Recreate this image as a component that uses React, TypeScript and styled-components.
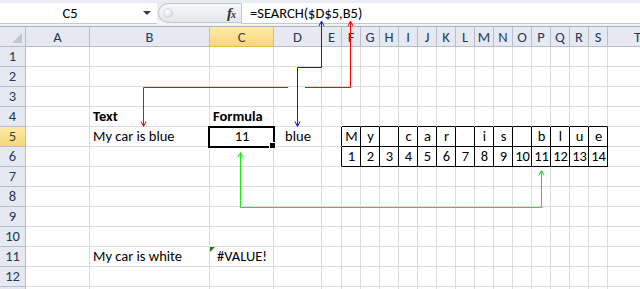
import React from "react";
import styled, { createGlobalStyle, css } from "styled-components";

const GRID = "#dadcdd";
const HEAD_LINE = "#b7bec9";
const FONT = "'Carlito', 'Lato', 'Liberation Sans', sans-serif";

const GlobalStyle = createGlobalStyle`
  html, body {
    margin: 0;
    padding: 0;
    background: #ffffff;
    overflow: hidden;
  }
`;

const Window = styled.div`
  position: relative;
  width: 640px;
  height: 289px;
  overflow: hidden;
  font-family: ${FONT};
  color: #000;
`;

const FormulaBar = styled.div`
  display: flex;
  height: 27px;
  box-sizing: border-box;
  padding-top: 3px;
  background: linear-gradient(#e9ecf1, #e9ecf1 20px, #f4f5f7 21px);
  border-bottom: 1px solid #a9b1bc;
`;

const NameBox = styled.div`
  display: flex;
  align-items: center;
  width: 157px;
  height: 20px;
  background: #fff;
  border-bottom: 1px solid #c3c9d1;
  font-size: 14.5px;
`;

const NameText = styled.div`
  width: 140px;
  text-align: center;
`;

const DropArrow = styled.div`
  margin-left: 3px;
  width: 0;
  height: 0;
  border-left: 4px solid transparent;
  border-right: 4px solid transparent;
  border-top: 4px solid #3a3a3a;
`;

const Splitter = styled.div`
  position: relative;
  display: flex;
  align-items: center;
  justify-content: flex-end;
  margin-left: 1px;
  width: 83px;
  height: 20px;
  box-sizing: border-box;
  border: 1px solid #c2c8d0;
  border-right: none;
  border-radius: 10px 0 0 10px;
  background: linear-gradient(#f7f8fa, #e3e7ec);
  padding-right: 6px;
`;

const Knob = styled.div`
  position: absolute;
  left: 4px;
  top: 4px;
  width: 10px;
  height: 10px;
  border-radius: 50%;
  background: radial-gradient(circle at 40% 35%, #ffffff, #cfd4da);
  border: 1px solid #d5dae0;
  box-sizing: border-box;
`;

const Fx = styled.span`
  font-family: 'Liberation Serif', serif;
  font-style: italic;
  font-weight: bold;
  font-size: 15px;
  color: #333;
  letter-spacing: -1px;
  sub {
    font-size: 10px;
    vertical-align: baseline;
  }
`;

const FormulaInput = styled.div`
  flex: 1;
  display: flex;
  align-items: center;
  height: 20px;
  padding-left: 8px;
  background: #fff;
  border-left: 1px solid #c2c8d0;
  border-bottom: 1px solid #c3c9d1;
  font-size: 14.5px;
  white-space: nowrap;
`;

const Sheet = styled.div<{ $cols: string }>`
  display: grid;
  grid-template-columns: ${({ $cols }) => $cols};
  grid-auto-rows: 20px;
  width: 668px;
`;

const activeHeader = css`
  background: linear-gradient(#fdeaa8, #f9d77c);
  color: #3c3c3c;
`;

const Corner = styled.div`
  position: relative;
  box-sizing: border-box;
  background: #e6e9f1;
  border-right: 1px solid ${HEAD_LINE};
  border-bottom: 1px solid ${HEAD_LINE};
  &::after {
    content: "";
    position: absolute;
    right: 3px;
    bottom: 3px;
    width: 0;
    height: 0;
    border-left: 10px solid transparent;
    border-bottom: 10px solid #bfc6cf;
  }
`;

const ColHeader = styled.div<{ $active?: boolean }>`
  display: flex;
  align-items: center;
  justify-content: center;
  box-sizing: border-box;
  background: #e6e9f1;
  border-right: 1px solid ${HEAD_LINE};
  border-bottom: 1px solid ${HEAD_LINE};
  font-size: 14.5px;
  color: #23395a;
  ${({ $active }) => $active && activeHeader}
  ${({ $active }) => $active && css`border-bottom-color: #f0b64a;`}
`;

const RowHeader = styled.div<{ $active?: boolean }>`
  display: flex;
  align-items: flex-end;
  justify-content: center;
  padding-bottom: 1px;
  box-sizing: border-box;
  background: #e6e9f1;
  border-right: 1px solid ${HEAD_LINE};
  border-bottom: 1px solid ${HEAD_LINE};
  font-size: 14.5px;
  color: #23395a;
  ${({ $active }) => $active && activeHeader}
  ${({ $active }) => $active && css`border-right-color: #f0b64a;`}
`;

const Cell = styled.div<{
  $right: string;
  $bottom: string;
  $align: "left" | "center";
  $bold?: boolean;
}>`
  position: relative;
  display: flex;
  align-items: flex-end;
  justify-content: ${({ $align }) => ($align === "center" ? "center" : "flex-start")};
  box-sizing: border-box;
  padding: 0 2px 1px 3px;
  border-right: 1px solid ${({ $right }) => $right};
  border-bottom: 1px solid ${({ $bottom }) => $bottom};
  font-size: 14.5px;
  line-height: 17px;
  font-weight: ${({ $bold }) => ($bold ? "bold" : "normal")};
  white-space: nowrap;
`;

const Selection = styled.div`
  position: absolute;
  left: -2px;
  right: -2px;
  top: -1px;
  bottom: -2px;
  border: 2px solid #000;
  z-index: 2;
  pointer-events: none;
  &::after {
    content: "";
    position: absolute;
    right: -3px;
    bottom: -3px;
    width: 5px;
    height: 5px;
    background: #000;
    border: 1px solid #fff;
  }
`;

const ErrorFlag = styled.div`
  position: absolute;
  left: 0;
  top: 0;
  width: 0;
  height: 0;
  border-top: 5px solid #1f7a1f;
  border-right: 5px solid transparent;
`;

const ArrowLayer = styled.svg`
  position: absolute;
  left: 0;
  top: 0;
  pointer-events: none;
  z-index: 5;
`;

type Col = { key: string; w: number };

const COLS: Col[] = [
  { key: "A", w: 64 },
  { key: "B", w: 120 },
  { key: "C", w: 64 },
  { key: "D", w: 48 },
  { key: "E", w: 20 },
  ..."FGHIJKLMNOPQRS".split("").map((key) => ({ key, w: 19 })),
  { key: "T", w: 60 },
];

// row 13 only peeks in at the bottom edge, so its number is left off
const ROWS = 13;
const LABELLED_ROWS = 12;

type Content = { text: string; bold?: boolean; align?: "left" | "center"; error?: boolean };

const chars = "My car is blue".split("");
const tableCols = "FGHIJKLMNOPQRS".split("");

const CELLS: Record<string, Content> = {
  B4: { text: "Text", bold: true },
  C4: { text: "Formula", bold: true },
  B5: { text: "My car is blue" },
  C5: { text: "11", align: "center" },
  D5: { text: "blue", align: "center" },
  B11: { text: "My car is white" },
  C11: { text: "#VALUE!", align: "center", error: true },
};
tableCols.forEach((c, i) => {
  CELLS[`${c}5`] = { text: chars[i] === " " ? "" : chars[i], align: "center" };
  CELLS[`${c}6`] = { text: String(i + 1), align: "center" };
});

const boxed = (col: number, row: number) =>
  col >= 5 && col <= 18 && (row === 5 || row === 6);

const ACTIVE_COL = "C";
const ACTIVE_ROW = 5;

const upHead = (x: number, y: number) => `M${x - 2.5} ${y + 5} L${x} ${y} L${x + 2.5} ${y + 5}`;
const downHead = (x: number, y: number) => `M${x - 2.5} ${y - 5} L${x} ${y} L${x + 2.5} ${y - 5}`;

const Arrows = () => (
  <ArrowLayer width={640} height={289}>
    <g fill="none" strokeWidth={1}>
      <g stroke="#1414f0">
        <path d="M321.5 22 V67.5 H297.5 V126" />
        <path d={upHead(321.5, 21)} />
        <path d={downHead(297.5, 126.5)} />
      </g>
      <g stroke="#ff0000">
        <path d="M350.5 22 V87.5 H305" />
        <path d="M288 87.5 H143.5 V126" />
        <path d={upHead(350.5, 21)} />
        <path d={downHead(143.5, 126.5)} />
      </g>
      <g stroke="#1ee61e">
        <path d="M240.5 153 V207.5 H541.5 V171" />
        <path d={upHead(240.5, 152.5)} />
        <path d={upHead(541.5, 170.5)} />
      </g>
    </g>
  </ArrowLayer>
);

export default function App() {
  const template = `26px ${COLS.map((c) => `${c.w}px`).join(" ")}`;
  const cells: React.ReactNode[] = [];

  cells.push(<Corner key="corner" />);
  COLS.forEach((c) =>
    cells.push(
      <ColHeader key={`h${c.key}`} $active={c.key === ACTIVE_COL}>
        {c.key}
      </ColHeader>
    )
  );

  for (let r = 1; r <= ROWS; r++) {
    cells.push(
      <RowHeader key={`r${r}`} $active={r === ACTIVE_ROW}>
        {r <= LABELLED_ROWS ? r : null}
      </RowHeader>
    );
    COLS.forEach((c, ci) => {
      const id = `${c.key}${r}`;
      const content = CELLS[id];
      const right = boxed(ci, r) || boxed(ci + 1, r) ? "#000" : GRID;
      const bottom = boxed(ci, r) || boxed(ci, r + 1) ? "#000" : GRID;
      cells.push(
        <Cell
          key={id}
          $right={right}
          $bottom={bottom}
          $align={content?.align ?? "left"}
          $bold={content?.bold}
        >
          {content?.error && <ErrorFlag />}
          {content?.text}
          {c.key === ACTIVE_COL && r === ACTIVE_ROW && <Selection />}
        </Cell>
      );
    });
  }

  return (
    <>
      <GlobalStyle />
      <Window>
        <FormulaBar>
          <NameBox>
            <NameText>C5</NameText>
            <DropArrow />
          </NameBox>
          <Splitter>
            <Knob />
            <Fx>
              f<sub>x</sub>
            </Fx>
          </Splitter>
          <FormulaInput>=SEARCH($D$5,B5)</FormulaInput>
        </FormulaBar>
        <Sheet $cols={template}>{cells}</Sheet>
        <Arrows />
      </Window>
    </>
  );
}
